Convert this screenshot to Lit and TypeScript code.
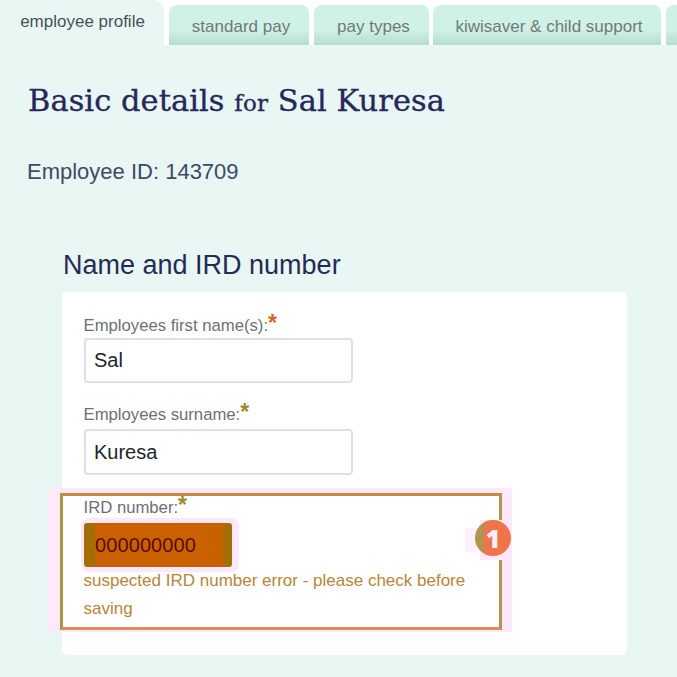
import { LitElement, html, css } from "lit";
import { customElement } from "lit/decorators.js";

@customElement("app-root")
export class AppRoot extends LitElement {
  static styles = css`
    :host { display: block; width: 677px; height: 677px; overflow: hidden; background: #e8f7f3; font-family: "Liberation Sans", Arial, sans-serif; }
    .tabs { display: flex; align-items: flex-end; gap: 5px; height: 45px; background: #fff; width: 700px; }
    .tab { flex: none; height: 40px; box-sizing: border-box; display: flex; justify-content: center; align-items: center; padding: 4px 0 0 4px; font-size: 17px; color: #6f7a78; border-radius: 8px 8px 0 0; background: linear-gradient(#cff1e6 0%, #cff1e6 62%, #b8dccf 100%); }
    .tab.active { height: 45px; background: #e8f7f3; color: #4a4f55; align-items: flex-start; padding: 12px 0 0 1px; border-radius: 0 10px 0 0; }
    .t1 { width: 164px; } .t2 { width: 140px; } .t3 { width: 115px; } .t4 { width: 228px; margin-left: -1px; } .t5 { width: 40px; }
    .content { padding: 36px 0 0 28px; }
    h1 { margin: 0; font-family: "DejaVu Serif", serif; font-weight: 400; font-size: 30.4px; line-height: 40px; color: #27275c; letter-spacing: 0.1px; -webkit-text-stroke: 0.35px #27275c; }
    h1 small { font-size: 23px; }
    .id { margin: 36px 0 0 -1px; font-size: 22px; line-height: 26px; color: #3f4a68; }
    h2 { margin: 65px 0 0 35px; font-weight: 400; font-size: 27px; line-height: 30px; color: #262a57; }
    .card { margin: 12px 0 0 34px; width: 565px; height: 363px; box-sizing: border-box; background: #fff; border-radius: 5px; padding: 22px 22px; }
    .field { width: 269px; }
    .field + .field { margin-top: 20px; }
    label { display: block; font-size: 16.7px; line-height: 24px; color: #6b7074; margin-left: -0.5px; }
    .star { font-size: 23px; font-weight: 700; line-height: 10px; color: #d2662a; }
    .star.olive { color: #9c8a30; }
    .input { box-sizing: border-box; width: 269px; height: 45px; padding-left: 8px; border: 2px solid #e0e0e0; border-radius: 4px; display: flex; align-items: center; font-size: 20px; color: #22252b; background: #fff; }
    .field + .field .input { margin-top: 2px; height: 46px; }
    .ird { position: relative; margin-top: 20px; width: 390px; }
    .ird label { line-height: 26px; }
    .bad { position: relative; width: 148px; height: 44px; margin-top: 2px; box-sizing: border-box; padding-left: 11px; border-radius: 3px; display: flex; align-items: center; font-size: 20px; letter-spacing: 0.1px; color: #5c0c04; background: linear-gradient(90deg, #a26e05 0 11px, #c96100 11px 139px, #a26e05 139px); box-shadow: 2px 0 0 5px #fde8fb; }
    .msg { margin: 0 0 0 -0.5px; width: 400px; font-size: 17px; line-height: 28px; color: #b5873a; }
    .halo { position: absolute; left: -36px; top: -7px; width: 464px; height: 144px; box-sizing: border-box; border-style: solid; border-color: #fde9f9; border-width: 5px 10px 2px 12px; pointer-events: none; }
    .halo.a { left: 381px; top: 33px; width: 12px; height: 24px; border: 0; background: #fdeffb; }
    .halo.b { left: 396px; top: 25px; width: 32px; height: 40px; border: 0; background: #fde9f9; }
    .mark { position: absolute; left: -24px; top: -2px; width: 442px; height: 137px; box-sizing: border-box; border-style: solid; border-width: 3px; border-color: #c78a45 #b09450 #e58a5e #a89648; pointer-events: none; }
    .badge { position: absolute; left: 391px; top: 25px; width: 36px; height: 36px; border-radius: 50%; background: linear-gradient(90deg, #b09450 0 26%, #ee7449 26%); color: #fdeefa; font-family: "Open Sans", sans-serif; font-weight: 800; font-size: 25px; line-height: 36px; text-align: center; }
  `;

  render() {
    return html`
      <div class="tabs">
        <div class="tab active t1">employee profile</div>
        <div class="tab t2">standard pay</div>
        <div class="tab t3">pay types</div>
        <div class="tab t4">kiwisaver &amp; child support</div>
        <div class="tab t5"></div>
      </div>
      <div class="content">
        <h1>Basic details <small>for</small> Sal Kuresa</h1>
        <div class="id">Employee ID: 143709</div>
        <h2>Name and IRD number</h2>
        <div class="card">
          <div class="field">
            <label>Employees first name(s):<span class="star">*</span></label>
            <div class="input">Sal</div>
          </div>
          <div class="field">
            <label>Employees surname:<span class="star olive">*</span></label>
            <div class="input">Kuresa</div>
          </div>
          <div class="ird">
            <div class="halo"></div>
            <label>IRD number:<span class="star olive">*</span></label>
            <div class="bad">000000000</div>
            <div class="msg">suspected IRD number error - please check before saving</div>
            <div class="mark"></div>
            <div class="halo a"></div>
            <div class="halo b"></div>
            <div class="badge">1</div>
          </div>
        </div>
      </div>
    `;
  }
}
